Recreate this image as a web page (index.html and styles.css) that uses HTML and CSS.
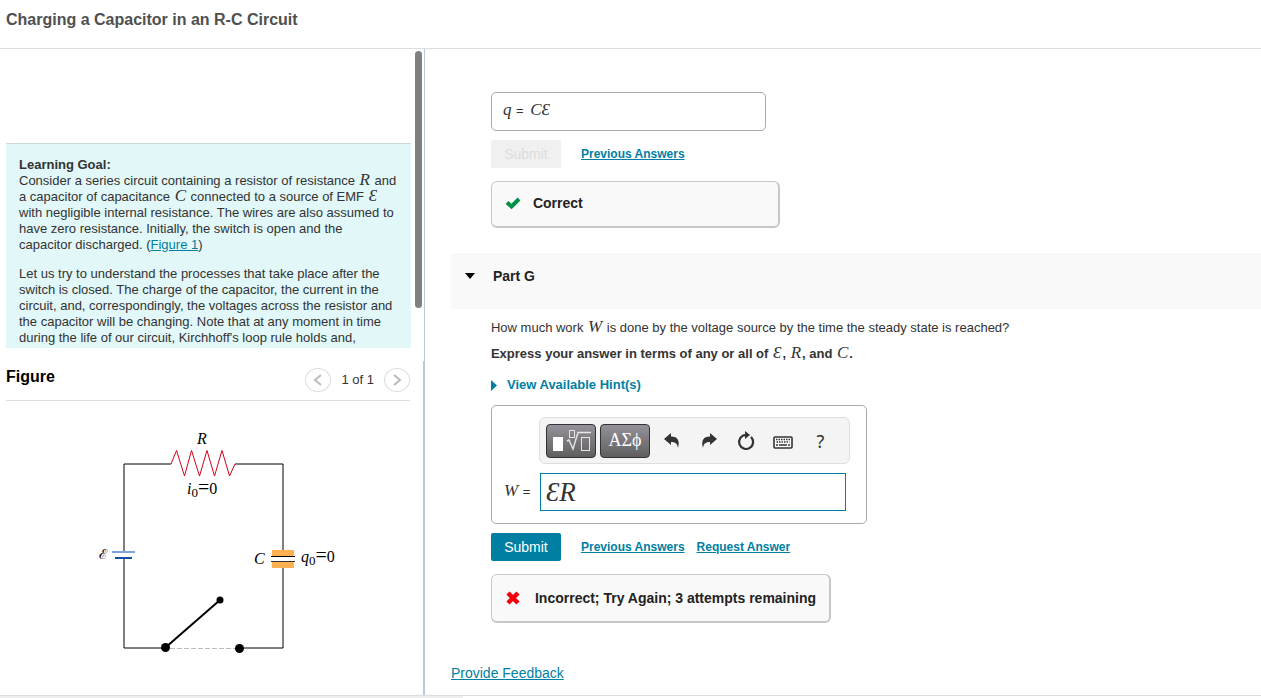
FILE: index.html
```html
<!DOCTYPE html>
<html lang="en">
<head>
    <meta charset="UTF-8">
    <meta name="viewport" content="width=device-width, initial-scale=1.0">
    <title>Charging a Capacitor in an R-C Circuit</title>
    <link rel="stylesheet" href="styles.css">
</head>
<body>
    <header class="page-header">
        <h1>Charging a Capacitor in an R-C Circuit</h1>
    </header>

    <main class="layout">
        <aside class="sidebar">
            <section class="intro">
                <div class="goal">
                    <h2>Learning Goal:</h2>
                    <p>Consider a series circuit containing a resistor of resistance <i class="math">R</i> and a capacitor of capacitance <i class="math">C</i> connected to a source of EMF <i class="math">Ɛ</i> with negligible internal resistance. The wires are also assumed to have zero resistance. Initially, the switch is open and the capacitor discharged. (<a href="#figure">Figure 1</a>)</p>
                    <p>Let us try to understand the processes that take place after the switch is closed. The charge of the capacitor, the current in the circuit, and, correspondingly, the voltages across the resistor and the capacitor will be changing. Note that at any moment in time during the life of our circuit, Kirchhoff's loop rule holds and,</p>
                </div>
                <div class="scroll-thumb"></div>
            </section>

            <section class="figure" id="figure">
                <div class="figure-head">
                    <h2>Figure</h2>
                    <div class="pager">
                        <button type="button" aria-label="Previous figure">
                            <svg width="10" height="14" viewBox="0 0 10 14"><path d="M8 2L2 7l6 5"/></svg>
                        </button>
                        <span>1 of 1</span>
                        <button type="button" aria-label="Next figure">
                            <svg width="10" height="14" viewBox="0 0 10 14"><path d="M2 2l6 5-6 5"/></svg>
                        </button>
                    </div>
                </div>

                <svg class="circuit" width="260" height="240" viewBox="90 425 260 240">
                    <!-- wires -->
                    <path class="wire" d="M171 464H124V552M124 558V648H166M239 648H283V568M283 550V464H235"/>
                    <path class="resistor" d="M171 464L176.500 450.500L184.500 476L191.500 450.500L199.500 476L207 450.500L214.500 476L222 450.500L229.500 476L235 464"/>
                    <!-- battery -->
                    <path d="M112 552H135" stroke="#7fa3d9" stroke-width="2"/>
                    <path d="M115 558H132" stroke="#1250a5" stroke-width="2"/>
                    <!-- capacitor -->
                    <rect x="272" y="550" width="22" height="18" fill="#ffb152"/>
                    <rect x="272" y="557" width="22" height="4" fill="#fff"/>
                    <path d="M271 556.500H295" stroke="#000"/>
                    <path d="M271 561.500H295" stroke="#333"/>
                    <!-- switch -->
                    <path d="M170 648.500H236" stroke="#bbb" stroke-dasharray="5 2"/>
                    <path d="M165.500 647.500L220 600" stroke="#000" stroke-width="2"/>
                    <circle cx="165.500" cy="647.500" r="4.500"/>
                    <circle cx="239.500" cy="648.500" r="4.500"/>
                    <circle cx="220" cy="600" r="3.500"/>
                    <text class="it" x="197" y="444">R</text>
                    <text x="187" y="494"><tspan class="it">i</tspan><tspan class="sub" dy="3">0</tspan><tspan class="eq" dy="-3">=</tspan>0</text>
                    <text class="it" x="254" y="564">C</text>
                    <text x="301" y="562"><tspan class="it">q</tspan><tspan class="sub" dy="3">0</tspan><tspan class="eq" dy="-3">=</tspan>0</text>
                    <text class="emf" x="99" y="559">ℰ</text>
                </svg>
            </section>
        </aside>

        <section class="content">
            <div class="part">
                <div class="answer-line"><i class="math">q</i> = <i class="math result">CƐ</i></div>
                <div class="actions">
                    <button type="button" class="submit" disabled>Submit</button>
                    <a href="#">Previous Answers</a>
                </div>
                <div class="feedback correct">
                    <svg width="16" height="14" viewBox="0 0 16 14"><path d="M2 6.500l4.500 4L14 3" fill="none" stroke="#008f46" stroke-width="4"/></svg>
                    Correct
                </div>
            </div>

            <div class="part-head">
                <svg width="10" height="6" viewBox="0 0 10 6"><path d="M0 0h10L5 6z"/></svg>
                <h2>Part G</h2>
            </div>

            <div class="part">
                <p class="question">How much work <i class="math">W</i> is done by the voltage source by the time the steady state is reached?</p>
                <p class="instruction">Express your answer in terms of any or all of <i class="math">Ɛ</i>, <i class="math">R</i>, and <i class="math">C</i>.</p>
                <a class="hint" href="#">
                    <svg width="6" height="11" viewBox="0 0 6 11"><path d="M0 0l6 5.500L0 11z"/></svg>View Available Hint(s)
                </a>

                <div class="answer-box">
                    <div class="toolbar">
                        <button type="button" class="key" aria-label="Templates">
                            <svg width="40" height="26" viewBox="0 0 40 26">
                                <rect x="2" y="9" width="10" height="14" fill="#fff"/>
                                <g fill="none" stroke="#e6e6e6">
                                    <rect x="18.500" y="2.500" width="5" height="7"/>
                                    <rect x="30.500" y="9.500" width="8" height="13"/>
                                    <path d="M16 13l2-1 4 9 5-16.500h13" stroke-width="1.400"/>
                                </g>
                            </svg>
                        </button>
                        <button type="button" class="key">ΑΣϕ</button>
                        <button type="button" class="tool" aria-label="Undo">
                            <svg width="16" height="16" viewBox="0 0 16 16"><path d="M0 6l7-6v3.500c7 0 9 4.500 7 11.500C13.500 10.500 11 9 7 9v3z"/></svg>
                        </button>
                        <button type="button" class="tool" aria-label="Redo">
                            <svg width="16" height="16" viewBox="0 0 16 16"><path d="M16 6L9 0v3.500c-7 0-9 4.500-7 11.500C2.500 10.500 5 9 9 9v3z"/></svg>
                        </button>
                        <button type="button" class="tool" aria-label="Reset">
                            <svg width="18" height="20" viewBox="0 0 18 20"><path d="M14 6A7 7 0 1 1 8.500 4" fill="none" stroke="#333" stroke-width="2.200"/><path d="M8 0l5 4-5 4z"/></svg>
                        </button>
                        <button type="button" class="tool" aria-label="Keyboard shortcuts">
                            <svg width="20" height="16" viewBox="0 0 20 16">
                                <rect x="1" y="4" width="18" height="11" rx="1" fill="#fff" stroke="#333" stroke-width="1.600"/>
                                <path d="M3 6.500h14M3.500 9h13" stroke="#333" stroke-width="1.600" stroke-dasharray="1.500 1"/>
                                <path d="M3 12h2M6 12h8M15 12h2" stroke="#333" stroke-width="1.600"/>
                            </svg>
                        </button>
                        <button type="button" class="tool help" aria-label="Help">?</button>
                    </div>
                    <div class="entry">
                        <label for="answer"><i class="math">W</i> =</label>
                        <input type="text" id="answer" value="ƐR">
                    </div>
                </div>

                <div class="actions">
                    <button type="button" class="submit">Submit</button>
                    <a href="#">Previous Answers</a>
                    <a href="#">Request Answer</a>
                </div>
                <div class="feedback">
                    <svg width="16" height="14" viewBox="0 0 16 14"><path d="M3 2l10 10M13 2L3 12" stroke="#f0000c" stroke-width="4.500"/></svg>
                    Incorrect; Try Again; 3 attempts remaining
                </div>
            </div>

            <a class="provide" href="#">Provide Feedback</a>
        </section>
    </main>

    <footer class="bottom-bar"><div></div></footer>
</body>
</html>
```
FILE: styles.css
```css
* {
    box-sizing: border-box;
}

body {
    display: flex;
    flex-direction: column;
    min-height: 100vh;
    margin: 0;
    background-color: white;
    color: #333;
    font-family: "Liberation Sans", Arial, sans-serif;
    font-size: 13px;
    line-height: 16px;
}

h1, h2, p {
    margin: 0;
}

a {
    color: #007fa3;
}

button {
    font-family: inherit;
    padding: 0;
    cursor: pointer;
}

.math {
    margin: 0 1px;
    font-family: "Liberation Serif", "Times New Roman", serif;
    font-size: 17px;
    font-weight: normal;
    line-height: 13px;
}

.page-header {
    padding: 10px 6px 18px;
    border-bottom: 1px solid #ddd;
}

.page-header h1 {
    font-size: 16px;
    line-height: 20px;
    color: #505050;
}

.layout {
    display: grid;
    grid-template-columns: minmax(300px, 33.7%) 1fr;
    flex: 1;
}

/* Left column */
.sidebar {
    display: flex;
    flex-direction: column;
}

.intro {
    position: relative;
    height: 312px;
    padding: 94px 13px 13px 6px;
    border-right: 1px solid #b7cbdc;
}

.goal {
    height: 205px;
    padding: 13px 13px 0 13px;
    overflow: hidden;
    background-color: #e1f7f8;
    border-top: 1px solid #ccd8d8;
}

.goal h2 {
    font-size: 13px;
    line-height: 16px;
}

.goal p {
    margin-bottom: 13px;
}

.scroll-thumb {
    position: absolute;
    top: 2px;
    right: 2px;
    width: 7px;
    height: 257px;
    border-radius: 4px;
    background-color: #808080;
}

.figure {
    flex: 1;
    padding: 0 13px 0 6px;
    border-right: 2px solid #b7cbdc;
}

.figure-head {
    display: flex;
    justify-content: space-between;
    height: 40px;
    padding-top: 6px;
    border-bottom: 1px solid #ddd;
}

.figure-head h2 {
    font-size: 16px;
    line-height: 20px;
    color: #000;
}

.pager {
    display: flex;
    align-items: center;
    gap: 10px;
    height: 26px;
}

.pager button {
    display: flex;
    align-items: center;
    justify-content: center;
    width: 26px;
    height: 24px;
    border: 1px solid #ddd;
    border-radius: 50%;
    background-color: white;
}

.pager path {
    fill: none;
    stroke: #bbb;
    stroke-width: 2;
}

.circuit {
    display: block;
    margin: 24px 0 0 84px;
    font-family: "Liberation Serif", "Times New Roman", serif;
    font-size: 16px;
}

.circuit .wire {
    fill: none;
    stroke: #000;
    stroke-width: 1;
}

.circuit .resistor {
    fill: none;
    stroke: #d0021b;
}

.circuit .it {
    font-style: italic;
}

.circuit .sub {
    font-size: 13px;
}

.circuit .eq {
    font-size: 20px;
}

.circuit .emf {
    font-size: 14px;
}

/* Right column */
.content {
    padding: 43px 0 10px 26px;
}

.part {
    padding-left: 40px;
}

.answer-line {
    width: 275px;
    height: 39px;
    padding: 10px;
    border: 1px solid #aaa;
    border-radius: 5px;
}

.result {
    margin-left: 3px;
}

.actions {
    display: flex;
    align-items: center;
    gap: 12px;
    margin-top: 9px;
    font-size: 12px;
    font-weight: bold;
}

.submit {
    width: 70px;
    height: 28px;
    margin-right: 8px;
    border: none;
    border-radius: 2px;
    background-color: #007fa3;
    color: white;
    font-size: 14px;
}

.submit:disabled {
    background-color: #f0f0f0;
    color: #dcdcdc;
}

.feedback {
    display: flex;
    align-items: center;
    gap: 14px;
    width: fit-content;
    height: 49px;
    margin-top: 13px;
    padding: 0 13px;
    border: 1px solid #c7c7c7;
    border-right-width: 2px;
    border-bottom-width: 2px;
    border-radius: 6px;
    background-color: #f9f9f9;
    color: #222;
    font-size: 14px;
    font-weight: bold;
}

.correct {
    width: 289px;
    height: 47px;
    gap: 12px;
    padding-bottom: 2px;
}

.part-head {
    display: flex;
    gap: 18px;
    height: 56px;
    margin-top: 25px;
    padding: 13px 14px;
    background-color: #f9f9f9;
}

.part-head svg {
    margin-top: 7px;
}

.part-head h2 {
    font-size: 14px;
    line-height: 20px;
    color: #222;
}

.question {
    margin-top: 11px;
}

.instruction {
    margin-top: 10px;
    font-weight: bold;
}

.hint {
    display: flex;
    align-items: center;
    gap: 10px;
    width: fit-content;
    margin-top: 15px;
    font-weight: bold;
    text-decoration: none;
}

.hint path {
    fill: #007fa3;
}

.answer-box {
    width: 376px;
    margin-top: 12px;
    padding: 11px 16px 12px 11px;
    border: 1px solid #aaa;
    border-radius: 5px;
}

.toolbar {
    display: flex;
    align-items: center;
    gap: 4px;
    height: 47px;
    margin-left: 36px;
    padding-left: 6px;
    border: 1px solid #ddd;
    border-radius: 6px;
    background-color: #f4f4f4;
}

.key {
    display: flex;
    align-items: center;
    justify-content: center;
    width: 50px;
    height: 34px;
    border: 1px solid #333;
    border-radius: 4px;
    background: linear-gradient(#95919a, #5f5f5f);
    color: white;
    font-family: "Liberation Serif", serif;
    font-size: 18px;
}

.tool {
    display: flex;
    align-items: center;
    justify-content: center;
    width: 33px;
    height: 34px;
    border: none;
    background: none;
    color: #333;
    fill: #333;
}

.key + .tool {
    margin-left: 2px;
}

.help {
    font-family: "Noto Sans", sans-serif;
    font-size: 18px;
}

.entry {
    display: flex;
    align-items: center;
    margin-top: 9px;
}

.entry label {
    width: 37px;
}

.entry input {
    width: 306px;
    height: 38px;
    padding: 0 5px;
    border: 1px solid #007fa3;
    color: #333;
    font-family: "Liberation Serif", "Times New Roman", serif;
    font-size: 27px;
    font-style: italic;
}

.provide {
    display: inline-block;
    margin-top: 42px;
    font-size: 14px;
}

.bottom-bar {
    height: 3px;
    border-top: 1px solid #ddd;
}

.bottom-bar div {
    width: 36.7%;
    height: 2px;
    background-color: #eee;
}
```
